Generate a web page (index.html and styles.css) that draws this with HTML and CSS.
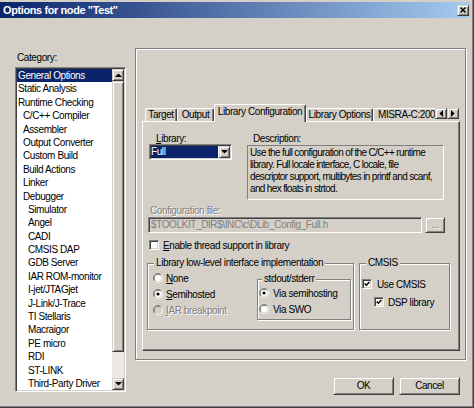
FILE: index.html
```html
<!DOCTYPE html>
<html>
<head>
<meta charset="utf-8">
<link rel="stylesheet" href="styles.css">
</head>
<body>
<div class="window">
  <div class="titlebar">
    <span class="title">Options for node "Test"</span>
    <span class="close raised"><svg viewBox="0 0 6 6"><path d="M0.5 0.5L5.5 5.5M5.5 0.5L0.5 5.5" stroke="#000" stroke-width="1.5" fill="none"/></svg></span>
  </div>
  <div class="content">
    <div class="leftcol">
      <div class="cat-label">Category:</div>
      <div class="list sunken">
        <div class="items">
          <div class="item sel">General Options</div>
          <div class="item">Static Analysis</div>
          <div class="item">Runtime Checking</div>
          <div class="item l1">C/C++ Compiler</div>
          <div class="item l1">Assembler</div>
          <div class="item l1">Output Converter</div>
          <div class="item l1">Custom Build</div>
          <div class="item l1">Build Actions</div>
          <div class="item l1">Linker</div>
          <div class="item l1">Debugger</div>
          <div class="item l2">Simulator</div>
          <div class="item l2">Angel</div>
          <div class="item l2">CADI</div>
          <div class="item l2">CMSIS DAP</div>
          <div class="item l2">GDB Server</div>
          <div class="item l2">IAR ROM-monitor</div>
          <div class="item l2">I-jet/JTAGjet</div>
          <div class="item l2">J-Link/J-Trace</div>
          <div class="item l2">TI Stellaris</div>
          <div class="item l2">Macraigor</div>
          <div class="item l2">PE micro</div>
          <div class="item l2">RDI</div>
          <div class="item l2">ST-LINK</div>
          <div class="item l2">Third-Party Driver</div>
        </div>
        <div class="vscroll">
          <div class="sbtn raised"><svg class="tri-v" viewBox="0 0 7 4"><path d="M0 4L3.5 0.5L7 4Z"/></svg></div>
          <div class="thumb raised"></div>
          <div class="track"></div>
          <div class="sbtn raised"><svg class="tri-v" viewBox="0 0 7 4"><path d="M0 0L3.5 3.5L7 0Z"/></svg></div>
        </div>
      </div>
    </div>
    <div class="rightcol">
      <div class="panel">
        <div class="tabctl">
          <div class="tabs">
            <div class="tab w-target">Target</div>
            <div class="tab w-output">Output</div>
            <div class="tab active w-libcfg">Library Configuration</div>
            <div class="tab w-libopt">Library Options</div>
            <div class="tab clip">MISRA-C:2004</div>
            <div class="tabarrows">
              <span class="tabarrow raised"><svg class="tri-h" viewBox="0 0 4 7"><path d="M4 0L0.5 3.5L4 7Z"/></svg></span>
              <span class="tabarrow raised"><svg class="tri-h" viewBox="0 0 4 7"><path d="M0 0L3.5 3.5L0 7Z"/></svg></span>
            </div>
          </div>
          <div class="page">
            <div class="row1">
              <div class="libcol">
                <div class="lbl"><u>L</u>ibrary:</div>
                <div class="combo sunken">
                  <div class="combo-val">Full</div>
                  <div class="combo-btn raised"><svg class="tri-v" viewBox="0 0 7 4"><path d="M0 0L3.5 3.5L7 0Z"/></svg></div>
                </div>
              </div>
              <div class="desccol">
                <div class="lbl">Description:</div>
                <div class="desc">Use the full configuration of the C/C++ runtime<br>library. Full locale interface, C locale, file<br>descriptor support, multibytes in printf and scanf,<br>and hex floats in strtod.</div>
              </div>
            </div>
            <div class="cfg-label disabled">Configuration file:</div>
            <div class="cfg-row">
              <div class="cfg-input sunken">$TOOLKIT_DIR$\INC\c\DLib_Config_Full.h</div>
              <div class="dots raised disabled">...</div>
            </div>
            <div class="check-row">
              <span class="cb sunken"></span>
              <span class="txt"><u>E</u>nable thread support in library</span>
            </div>
            <div class="groups">
              <div class="group g-lowlevel">
                <div class="legend">Library low-level interface implementation</div>
                <div class="g-inner">
                  <div class="radios">
                    <div class="rrow">
                      <svg class="rb" viewBox="0 0 12 12"><path d="M9.89 2.11A5.5 5.5 0 0 0 2.11 9.89" stroke="#808080" fill="none"/><path d="M2.11 9.89A5.5 5.5 0 0 0 9.89 2.11" stroke="#fff" fill="none"/><path d="M9.18 2.82A4.5 4.5 0 0 0 2.82 9.18" stroke="#404040" fill="none"/><path d="M2.82 9.18A4.5 4.5 0 0 0 9.18 2.82" stroke="#d4d0c8" fill="none"/><circle cx="6" cy="6" r="4" fill="#fff"/></svg>
                      <span class="rtxt"><u>N</u>one</span>
                    </div>
                    <div class="rrow">
                      <svg class="rb" viewBox="0 0 12 12"><path d="M9.89 2.11A5.5 5.5 0 0 0 2.11 9.89" stroke="#808080" fill="none"/><path d="M2.11 9.89A5.5 5.5 0 0 0 9.89 2.11" stroke="#fff" fill="none"/><path d="M9.18 2.82A4.5 4.5 0 0 0 2.82 9.18" stroke="#404040" fill="none"/><path d="M2.82 9.18A4.5 4.5 0 0 0 9.18 2.82" stroke="#d4d0c8" fill="none"/><circle cx="6" cy="6" r="4" fill="#fff"/><circle cx="6" cy="6" r="1.9" fill="#000"/></svg>
                      <span class="rtxt"><u>S</u>emihosted</span>
                    </div>
                    <div class="rrow">
                      <svg class="rb" viewBox="0 0 12 12"><path d="M9.89 2.11A5.5 5.5 0 0 0 2.11 9.89" stroke="#808080" fill="none"/><path d="M2.11 9.89A5.5 5.5 0 0 0 9.89 2.11" stroke="#fff" fill="none"/><path d="M9.18 2.82A4.5 4.5 0 0 0 2.82 9.18" stroke="#404040" fill="none"/><path d="M2.82 9.18A4.5 4.5 0 0 0 9.18 2.82" stroke="#d4d0c8" fill="none"/><circle cx="6" cy="6" r="4" fill="#d4d0c8"/></svg>
                      <span class="rtxt disabled"><u>I</u>AR breakpoint</span>
                    </div>
                  </div>
                  <div class="group g-std">
                    <div class="legend">stdout/stderr</div>
                    <div class="std-rows">
                      <div class="rrow">
                        <svg class="rb" viewBox="0 0 12 12"><path d="M9.89 2.11A5.5 5.5 0 0 0 2.11 9.89" stroke="#808080" fill="none"/><path d="M2.11 9.89A5.5 5.5 0 0 0 9.89 2.11" stroke="#fff" fill="none"/><path d="M9.18 2.82A4.5 4.5 0 0 0 2.82 9.18" stroke="#404040" fill="none"/><path d="M2.82 9.18A4.5 4.5 0 0 0 9.18 2.82" stroke="#d4d0c8" fill="none"/><circle cx="6" cy="6" r="4" fill="#fff"/><circle cx="6" cy="6" r="1.9" fill="#000"/></svg>
                        <span class="rtxt2">Via semihosting</span>
                      </div>
                      <div class="rrow">
                        <svg class="rb" viewBox="0 0 12 12"><path d="M9.89 2.11A5.5 5.5 0 0 0 2.11 9.89" stroke="#808080" fill="none"/><path d="M2.11 9.89A5.5 5.5 0 0 0 9.89 2.11" stroke="#fff" fill="none"/><path d="M9.18 2.82A4.5 4.5 0 0 0 2.82 9.18" stroke="#404040" fill="none"/><path d="M2.82 9.18A4.5 4.5 0 0 0 9.18 2.82" stroke="#d4d0c8" fill="none"/><circle cx="6" cy="6" r="4" fill="#fff"/></svg>
                        <span class="rtxt2">Via SWO</span>
                      </div>
                    </div>
                  </div>
                </div>
              </div>
              <div class="group g-cmsis">
                <div class="legend l-cmsis">CMSIS</div>
                <div class="crow c1">
                  <span class="cb sunken"><svg viewBox="0 0 7 7"><path d="M0.7 3L2.7 5L6.3 1.2" stroke="#000" stroke-width="1.7" fill="none"/></svg></span>
                  <span class="ctxt">Use CMSIS</span>
                </div>
                <div class="crow c2">
                  <span class="cb sunken"><svg viewBox="0 0 7 7"><path d="M0.7 3L2.7 5L6.3 1.2" stroke="#000" stroke-width="1.7" fill="none"/></svg></span>
                  <span class="ctxt2">DSP library</span>
                </div>
              </div>
            </div>
          </div>
        </div>
      </div>
      <div class="buttons">
        <div class="btn raised">OK</div>
        <div class="btn raised">Cancel</div>
      </div>
    </div>
  </div>
</div>
</body>
</html>
```

FILE: styles.css
```css
body {
  margin: 0;
  background: #d4d0c8;
  font-family: "Liberation Sans", Arial, sans-serif;
  font-size: 10px;
  letter-spacing: -0.4px;
  color: #000;
}

.window {
  width: 474px;
  height: 408px;
  box-sizing: border-box;
  padding-top: 2px;
  background: #d4d0c8;
  overflow: hidden;
  box-shadow: inset -1px -1px #404040, inset -2px -2px #808080;
}

.raised {
  box-sizing: border-box;
  background: #d4d0c8;
  border: 1px solid;
  border-color: #d4d0c8 #404040 #404040 #d4d0c8;
  box-shadow: inset 1px 1px #fff, inset -1px -1px #808080;
}

.sunken {
  box-sizing: border-box;
  border: 1px solid;
  border-color: #808080 #fff #fff #808080;
  box-shadow: inset 1px 1px #404040, inset -1px -1px #d4d0c8;
}

.disabled {
  color: #808080;
  text-shadow: 1px 1px 0 #fff;
}

/* title bar */
.titlebar {
  height: 16px;
  margin-right: 4px;
  display: flex;
  align-items: center;
  justify-content: space-between;
  background: linear-gradient(90deg, #0a246a, #a6caf0);
}

.title {
  color: #fff;
  font-weight: bold;
  font-size: 11px;
  letter-spacing: -0.4px;
  line-height: 16px;
  padding-left: 3px;
}

.close {
  width: 12px;
  height: 11px;
  margin-right: 1px;
  display: flex;
  align-items: center;
  justify-content: center;
}

.close svg {
  width: 6px;
  height: 6px;
}

.content {
  display: flex;
}

/* left column */
.leftcol {
  margin-left: 15px;
  width: 111px;
  padding-top: 33px;
}

.cat-label {
  line-height: 13px;
  padding-left: 2px;
}

.list {
  margin-top: 3px;
  height: 325px;
  padding: 1px;
  background: #fff;
  display: flex;
}

.items {
  flex: 1;
  overflow: hidden;
}

.item {
  height: 13.4px;
  line-height: 13.4px;
  white-space: nowrap;
  padding-left: 1px;
}

.item.l1 { padding-left: 6px; }
.item.l2 { padding-left: 11px; }

.item.sel {
  background: #0a246a;
  color: #fff;
}

.vscroll {
  width: 12px;
  display: flex;
  flex-direction: column;
}

.sbtn {
  height: 12px;
  flex: none;
  display: flex;
  align-items: center;
  justify-content: center;
}

.tri-v {
  width: 7px;
  height: 4px;
}

.tri-h {
  width: 4px;
  height: 7px;
}

.thumb {
  height: 271px;
  flex: none;
}

.track {
  flex: 1;
  background: #ebe9e5;
}

/* right column */
.rightcol {
  margin-left: 9px;
  width: 331px;
}

.panel {
  margin-top: 30px;
  height: 312px;
  box-sizing: border-box;
  border: 1px solid #808080;
  box-shadow: 1px 1px 0 #fff, inset 1px 1px 0 #fff;
  padding: 55px 0 0 6px;
}

.tabctl {
  width: 318px;
}

.tabs {
  display: flex;
  align-items: flex-end;
  height: 17px;
  padding-left: 3px;
}

.tab {
  flex: none;
  height: 13px;
  box-sizing: border-box;
  border-top: 1px solid #fff;
  border-left: 1px solid #fff;
  border-right: 1px solid #404040;
  box-shadow: inset -1px 0 #808080;
  border-radius: 2px 2px 0 0;
  line-height: 12px;
  text-align: center;
  white-space: nowrap;
}

.tab.active {
  height: 18px;
  margin-bottom: -1px;
  padding-top: 1px;
  position: relative;
  z-index: 1;
  background: #d4d0c8;
}

.w-target { width: 32px; }
.w-output { width: 37px; }
.w-libcfg { width: 92px; }
.w-libopt { width: 67px; }

.tab.clip {
  width: 62px;
  overflow: hidden;
  text-align: left;
  padding-left: 4px;
  border-right: none;
  box-shadow: none;
}

.tabarrows {
  display: flex;
  align-self: flex-end;
  margin-bottom: 2px;
}

.tabarrow {
  width: 12px;
  height: 11px;
  display: flex;
  align-items: center;
  justify-content: center;
}

.page {
  height: 230px;
  box-sizing: border-box;
  border-top: 1px solid #fff;
  border-left: 1px solid #fff;
  border-right: 1px solid #404040;
  border-bottom: 1px solid #404040;
  box-shadow: inset -1px -1px #808080;
  padding: 11px 0 0 6px;
}

.row1 {
  display: flex;
  align-items: flex-start;
}

.libcol {
  width: 83px;
}

.lbl {
  line-height: 11px;
  height: 11px;
  white-space: nowrap;
}

.libcol .lbl { padding-left: 7px; }

.combo {
  height: 16px;
  padding: 1px;
  background: #fff;
  display: flex;
}

.combo-val {
  flex: 1;
  background: #0a246a;
  color: #fff;
  line-height: 12px;
  margin-right: 1px;
}

.combo-btn {
  width: 11px;
  flex: none;
  display: flex;
  align-items: center;
  justify-content: center;
}

.desccol {
  margin-left: 15px;
}

.desccol .lbl { padding-left: 6px; }

.desc {
  margin-top: 1px;
  width: 197px;
  height: 55px;
  box-sizing: border-box;
  border: 1px solid;
  border-color: #808080 #fff #fff #808080;
  padding: 1px 0 0 2px;
  line-height: 12px;
  letter-spacing: -0.65px;
  white-space: nowrap;
  overflow: hidden;
}

.cfg-label {
  margin-top: 5px;
  line-height: 12px;
  padding-left: 1px;
}

.cfg-row {
  display: flex;
  margin-left: -1px;
}

.cfg-input {
  width: 274px;
  height: 16px;
  padding: 1px 0 0 2px;
  line-height: 12px;
  color: #808080;
  white-space: nowrap;
}

.dots {
  width: 20px;
  height: 16px;
  margin-left: 3px;
  text-align: center;
  line-height: 13px;
}

.check-row {
  display: flex;
  align-items: center;
  height: 10px;
  margin-top: 7px;
}

.cb {
  width: 10px;
  height: 10px;
  flex: none;
  background: #fff;
  display: flex;
  align-items: center;
  justify-content: center;
}

.cb svg {
  width: 6px;
  height: 6px;
}

.check-row .txt {
  margin-left: 4px;
  line-height: 11px;
}

/* groups */
.groups {
  display: flex;
  align-items: stretch;
  margin-top: 13px;
  margin-left: -2px;
}

.group {
  box-sizing: border-box;
  border: 1px solid #808080;
  box-shadow: 1px 1px 0 #fff, inset 1px 1px 0 #fff;
}

.legend {
  display: table;
  margin-top: -6px;
  margin-left: 6px;
  padding: 0 2px;
  line-height: 10px;
  background: #d4d0c8;
  white-space: nowrap;
}

.g-lowlevel {
  width: 207px;
  padding-bottom: 9px;
}

.g-inner {
  display: flex;
  align-items: flex-start;
  padding-left: 5px;
}

.radios {
  width: 104px;
  margin-top: 2px;
}

.rrow {
  display: flex;
  align-items: center;
  height: 16px;
  white-space: nowrap;
}

.rb {
  width: 10px;
  height: 10px;
  flex: none;
}

.rtxt { margin-left: 3px; }
.rtxt2 { margin-left: 4px; }

.g-std {
  width: 94px;
  margin-top: 11px;
  padding: 0 0 2px 1px;
}

.g-std .legend {
  margin-left: 3px;
}

.std-rows {
  margin-top: 1px;
}

.g-cmsis {
  width: 91px;
  margin-left: 5px;
  padding-left: 2px;
}

.l-cmsis {
  margin-left: 4px;
}

.crow {
  display: flex;
  align-items: center;
  height: 18px;
  white-space: nowrap;
}

.crow.c1 { margin-top: 7px; }
.crow.c2 { padding-left: 12px; }

.ctxt { margin-left: 5px; }
.ctxt2 { margin-left: 4px; }

/* buttons */
.buttons {
  display: flex;
  justify-content: flex-end;
  gap: 5px;
  margin-top: 17px;
  padding-right: 6px;
}

.btn {
  width: 61px;
  height: 18px;
  text-align: center;
  line-height: 16px;
}
```
